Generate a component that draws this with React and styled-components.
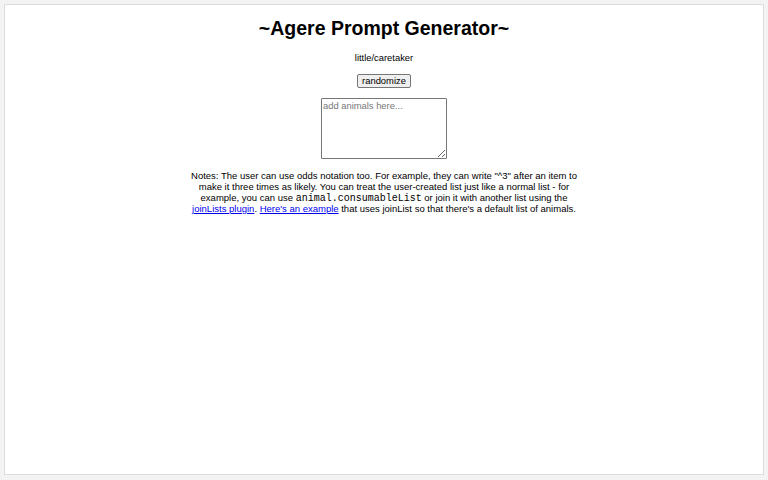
import styled, { createGlobalStyle } from "styled-components";

const GlobalStyle = createGlobalStyle`
  html, body {
    margin: 0;
    padding: 0;
    background: #f3f3f3;
  }
  body {
    font-family: "Liberation Sans", Arial, sans-serif;
  }
`;

const Frame = styled.div`
  box-sizing: border-box;
  margin: 4px 4px 0 4px;
  height: 471px;
  background: #fff;
  border: 1px solid #dcdcdc;
  display: flex;
  flex-direction: column;
  align-items: center;
  padding-top: 11px;
  color: #000;
`;

const Title = styled.h1`
  margin: 0;
  font-size: 19.5px;
  font-weight: bold;
  line-height: 24px;
`;

const Output = styled.div`
  margin-top: 12px;
  font-size: 9.4px;
  line-height: 12px;
`;

const Button = styled.button`
  margin-top: 10px;
  font-family: "Liberation Sans", Arial, sans-serif;
  font-size: 9.4px;
  line-height: 12px;
  padding: 0px 4px;
  background: #efefef;
  border: 1px solid #767676;
  border-radius: 2px;
  color: #000;
`;

const AnimalInput = styled.textarea`
  box-sizing: border-box;
  margin-top: 10px;
  width: 126px;
  height: 61px;
  padding: 1px 1px;
  font-family: "Liberation Sans", Arial, sans-serif;
  font-size: 9.4px;
  line-height: 12px;
  border: 1px solid #767676;
  border-radius: 1px;
  &::placeholder {
    color: #777;
  }
`;

const Notes = styled.p`
  margin: 11px 0 0 0;
  width: 392px;
  text-align: center;
  font-size: 9.5px;
  line-height: 11px;
`;

const Code = styled.code`
  font-family: "Liberation Mono", "Courier New", monospace;
  font-size: 10px;
  line-height: 0;
`;

const Link = styled.a`
  color: #0000ee;
  text-decoration: underline;
`;

export default function App() {
  return (
    <>
      <GlobalStyle />
      <Frame>
        <Title>~Agere Prompt Generator~</Title>
        <Output>little/caretaker</Output>
        <Button>randomize</Button>
        <AnimalInput placeholder="add animals here..." />
        <Notes>
          Notes: The user can use odds notation too. For example, they can write
          "^3" after an item to make it three times as likely. You can treat the
          user-created list just like a normal list - for example, you can use{" "}
          <Code>animal.consumableList</Code> or join it with another list using
          the <Link href="#">joinLists plugin</Link>.{" "}
          <Link href="#">Here's an example</Link> that uses joinList so that
          there's a default list of animals.
        </Notes>
      </Frame>
    </>
  );
}
